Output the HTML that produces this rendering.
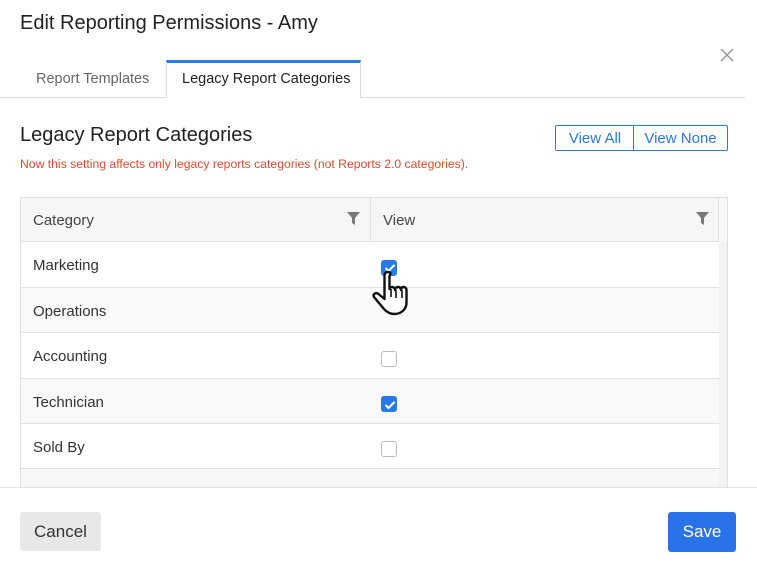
<!DOCTYPE html>
<html><head><style>
*{box-sizing:border-box;margin:0;padding:0}
body{width:757px;height:570px;background:#fff;font-family:"Liberation Sans",sans-serif;color:#222;position:relative;overflow:hidden}
.a{position:absolute}
.row{position:absolute;left:21px;width:698px;border-bottom:1px solid #e0e0e0;font-size:15px;color:#333}
.row span{position:absolute;left:12px;top:15px}
.cb{position:absolute;left:360px;width:16px;height:16px;border:1px solid #bbb;border-radius:3px;background:#fff}
.cb.on{background:#2a7ae4;border-color:#2a7ae4}
</style></head><body>
<div class="a" style="left:20px;top:12px;font-size:20px;color:#222">Edit Reporting Permissions - Amy</div>
<svg class="a" style="left:720px;top:48px" width="14" height="14"><path d="M1 1L13 13M13 1L1 13" stroke="#999" stroke-width="1.5"/></svg>
<div class="a" style="left:0;top:97px;width:745px;height:1px;background:#ddd"></div>
<div class="a" style="left:36px;top:71px;font-size:14.5px;color:#666">Report Templates</div>
<div class="a" style="left:166px;top:60px;width:195px;height:38px;background:#fff;border:1px solid #ddd;border-top:3px solid #2a7ae4;border-bottom:none"></div>
<div class="a" style="left:182px;top:71px;font-size:14.5px;color:#222">Legacy Report Categories</div>
<div class="a" style="left:20px;top:124px;font-size:20px;color:#222">Legacy Report Categories</div>
<div class="a" style="left:20px;top:157px;font-size:12.2px;color:#e4492e">Now this setting affects only legacy reports categories (not Reports 2.0 categories).</div>
<div class="a" style="left:555px;top:125px;width:173px;height:26px;border:1px solid #2a7ae4;border-radius:2px;font-size:15px;color:#2a7ae4">
<div class="a" style="left:0;top:4px;width:78px;text-align:center">View All</div>
<div class="a" style="left:77px;top:0;width:1px;height:24px;background:#2a7ae4"></div>
<div class="a" style="left:78px;top:4px;width:93px;text-align:center">View None</div></div>
<div class="a" style="left:20px;top:197px;width:708px;height:291px;border:1px solid #e0e0e0;border-bottom:none;background:#f8f8f8"></div>
<div class="a" style="left:719px;top:242px;width:8px;height:246px;background:#f2f2f2"></div>
<div class="a" style="left:21px;top:198px;width:698px;height:44px;background:#f6f6f6;border-bottom:1px solid #e0e0e0"></div>
<div class="a" style="left:370px;top:198px;width:1px;height:44px;background:#e0e0e0"></div>
<div class="a" style="left:718px;top:198px;width:1px;height:44px;background:#e0e0e0"></div>
<div class="a" style="left:33px;top:212px;font-size:15px;color:#444">Category</div>
<div class="a" style="left:383px;top:212px;font-size:15px;color:#444">View</div>
<svg class="a" style="left:347px;top:212px" width="13" height="13"><path d="M0 0H13L8 6V13L5 11V6Z" fill="#777"/></svg>
<svg class="a" style="left:696px;top:212px" width="13" height="13"><path d="M0 0H13L8 6V13L5 11V6Z" fill="#777"/></svg>
<div class="row" style="top:242px;height:46px;background:#fff"><span>Marketing</span><div class="cb on" style="top:18px"></div></div>
<div class="row" style="top:288px;height:45px;background:#f9f9f9"><span>Operations</span></div>
<div class="row" style="top:333px;height:46px;background:#fff"><span>Accounting</span><div class="cb" style="top:18px"></div></div>
<div class="row" style="top:379px;height:45px;background:#f9f9f9"><span>Technician</span><div class="cb on" style="top:17px"></div></div>
<div class="row" style="top:424px;height:45px;background:#fff"><span>Sold By</span><div class="cb" style="top:17px"></div></div>
<svg class="a" style="left:384px;top:263px" width="12" height="10"><path d="M1.5 5L4.5 8L10.5 2" stroke="#fff" stroke-width="2" fill="none"/></svg>
<svg class="a" style="left:384px;top:400px" width="12" height="10"><path d="M1.5 5L4.5 8L10.5 2" stroke="#fff" stroke-width="2" fill="none"/></svg>
<svg class="a" style="left:366px;top:270px" width="50" height="52"><path d="M22 2c-2 0-3.5 1.5-3.5 3.5V29l-6-5c-2.5-2-6 0-4.5 3l10 12c3 3.5 6.5 5 10.5 5c7 0 12-5 12-11.5V20c0-2-1.5-3-3-3s-2.5 1-2.5 3c0-2-1.5-3-3-3s-3 1-3 3c0-2-1.5-3-3-3s-2.5 1-2.5 2V5.5C25.5 3.5 24 2 22 2z" fill="#fff" stroke="#111" stroke-width="2.4" stroke-linejoin="round"/><path d="M30 20v8M36 20v8M25 19v8" stroke="#111" stroke-width="1.6"/></svg>
<div class="a" style="left:0;top:487px;width:757px;height:1px;background:#e0e0e0"></div>
<div class="a" style="left:20px;top:512px;width:81px;height:39px;background:#e8e8e8;border-radius:3px;font-size:17px;color:#333;text-align:center;line-height:39px">Cancel</div>
<div class="a" style="left:668px;top:512px;width:68px;height:40px;background:#2a72e8;border-radius:3px;font-size:17px;color:#fff;text-align:center;line-height:40px">Save</div>
</body></html>
